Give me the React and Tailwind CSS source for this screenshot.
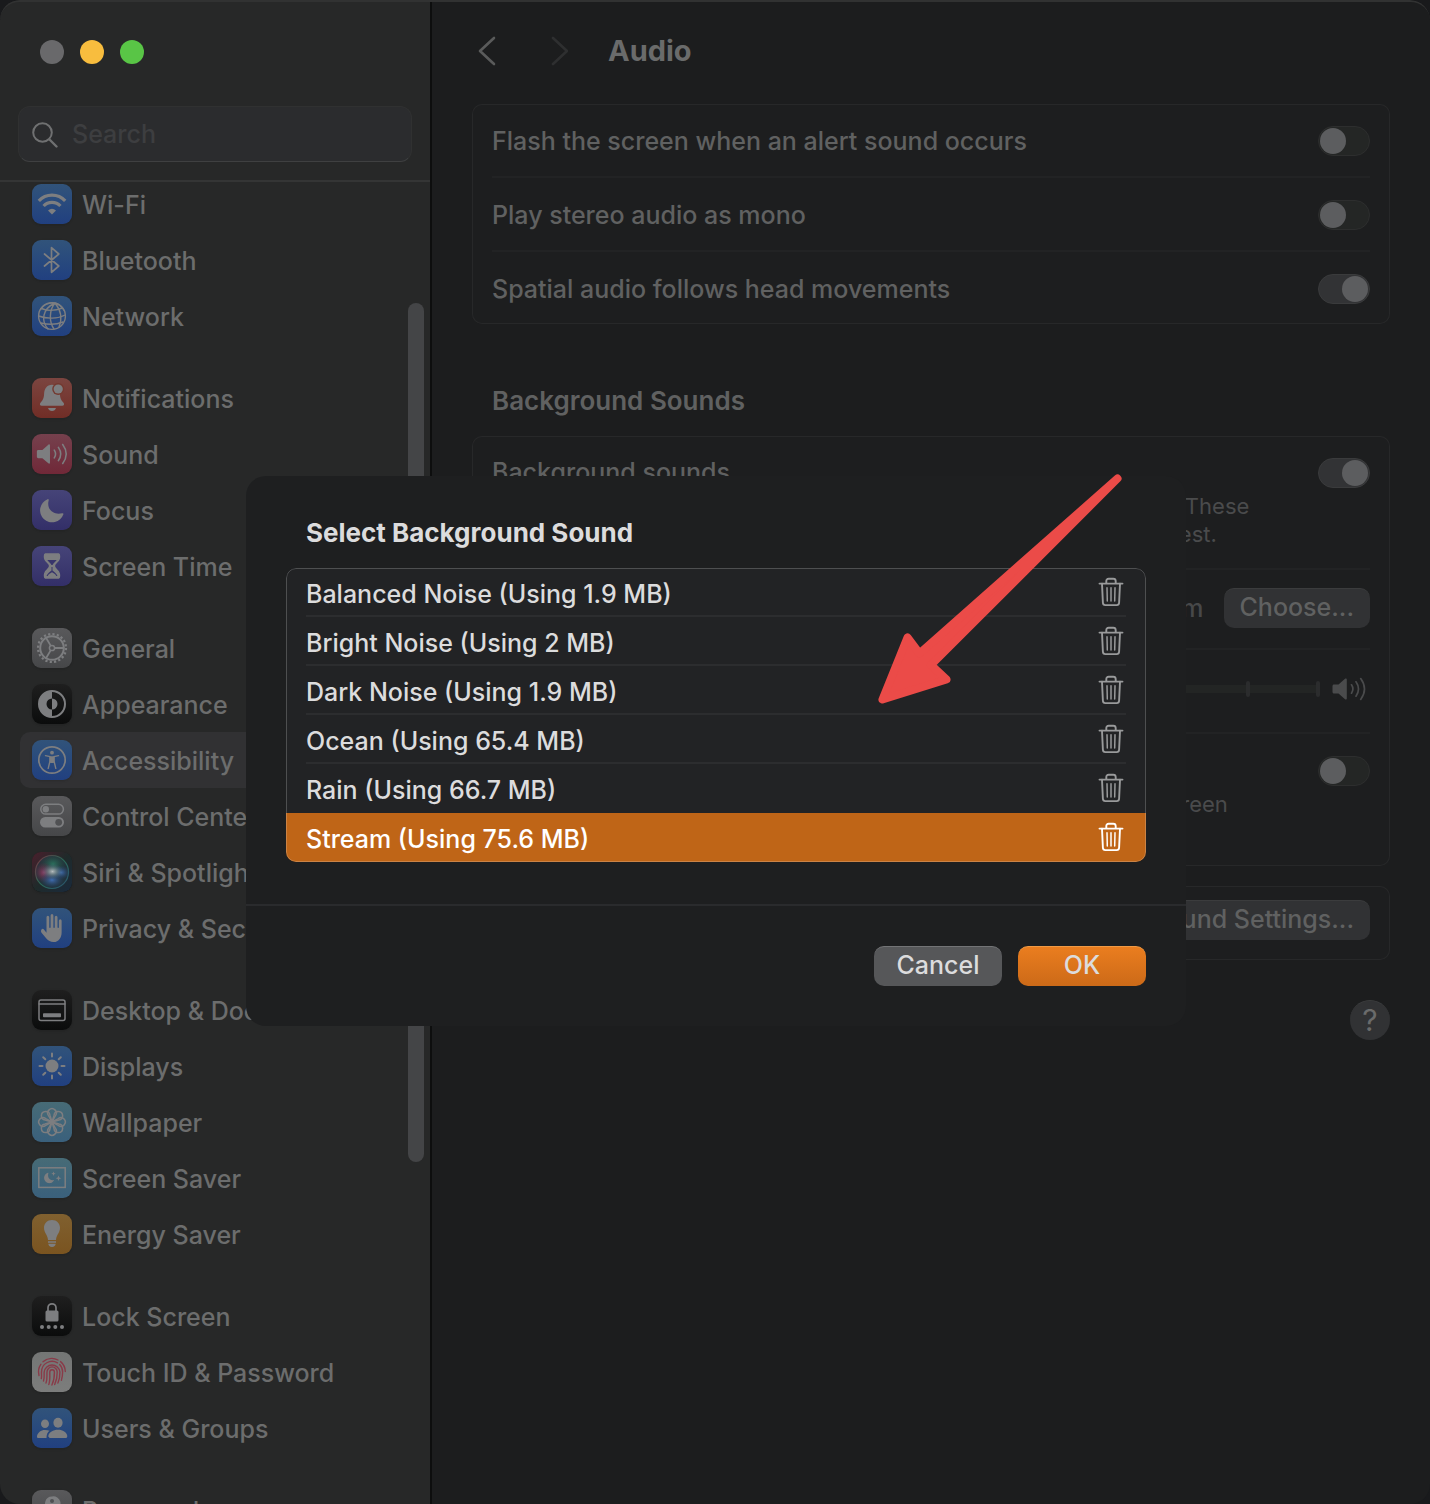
import React, { useState } from "react";
import { FaHand } from "react-icons/fa6";

const Speaker = ({ className }) => (
  <svg viewBox="0 0 34 24" className={className} fill="none" stroke="currentColor" strokeWidth="1.7" strokeLinecap="round">
    <path
      d="M2 7.5h4.5L13 1.8c.8-.7 1.8-.3 1.8.7v19c0 1-1 1.4-1.8.7L6.5 16.5H2c-.8 0-1.5-.7-1.5-1.5V9c0-.8.7-1.5 1.5-1.5z"
      fill="currentColor"
      stroke="none"
    />
    <path d="M19.5 7.8q2.8 4.2 0 8.4M24 4.8q5 7.2 0 14.4M28.7 1.6q7.6 10.4 0 20.8" />
  </svg>
);

const Trash = () => (
  <svg viewBox="0 0 26 30" className="h-[30px] w-[26px]" fill="none" stroke="currentColor" strokeWidth="1.9" strokeLinecap="round" strokeLinejoin="round">
    <path d="M1.5 6.6h23M8.3 6.4V4.2c0-1.5.9-2.4 2.4-2.4h4.6c1.5 0 2.4.9 2.4 2.4v2.2" />
    <path d="M4 6.8l.9 19c.1 1.4 1 2.3 2.4 2.3h11.4c1.4 0 2.3-.9 2.4-2.3l.9-19" />
    <path d="M9 10.7l.3 13.3M13 10.7V24M17 10.7L16.7 24" strokeWidth="1.5" />
  </svg>
);

// every drawing below lives on a 40x40 tile
const Glyph = ({ children }) => (
  <svg viewBox="0 0 40 40" className="h-10 w-10" fill="none" stroke="currentColor" strokeLinecap="round" strokeLinejoin="round">
    {children}
  </svg>
);

const icons = {
  wifi: (
    <Glyph>
      <g strokeWidth="3.2" strokeLinecap="butt">
        <path d="M6.8 16.8A18 18 0 0 1 33.2 16.8" />
        <path d="M11.6 22A11.4 11.4 0 0 1 28.4 22" />
      </g>
      <path d="M16 26.5q4-3.4 8 0l-4 4z" fill="currentColor" stroke="none" />
    </Glyph>
  ),
  bluetooth: (
    <Glyph>
      <path d="M12.5 14l14.3 12-7.3 6.3V7.7l7.3 6.3-14.3 12" strokeWidth="1.7" />
    </Glyph>
  ),
  network: (
    <Glyph>
      <g strokeWidth="1.4">
        <circle cx="20" cy="20" r="13.4" />
        <path d="M23 7C10 13 9 25 16 33M23 7c-6 7-6 19-1 26M23 7c5 6 8 14 4 24M23 7c-8-1-12 3-14.5 6.5M23 7c4 1 7 4 9.5 8" />
        <path d="M9.5 12.5c6 2.5 14 2.3 21-.5M6.7 20c8 3 19 3 26.5-1M9 27c8 2 16 1.5 22-1" />
      </g>
    </Glyph>
  ),
  bell: (
    <Glyph>
      <path
        d="M20 6.8c-5.2 0-7.7 4.2-7.9 9-.2 4.7-1.3 6.5-3.6 8.9-1.2 1.3-.5 3 1.2 3h20.6c1.7 0 2.4-1.7 1.2-3-2.3-2.4-3.4-4.2-3.6-8.9-.2-4.8-2.7-9-7.9-9z"
        fill="currentColor"
        stroke="none"
      />
      <path d="M16 30h8c-.6 2-2 3-4 3s-3.4-1-4-3z" fill="currentColor" stroke="none" />
      <circle cx="26.2" cy="11" r="6" fill="#74392f" stroke="none" />
      <circle cx="26.2" cy="11" r="4.6" fill="currentColor" stroke="none" />
    </Glyph>
  ),
  sound: <Speaker className="h-[22px] w-8" />,
  moon: (
    <Glyph>
      <path d="M15.6 9.2c.8-.3 1.3.3 1.1 1-2.4 8.5 4.2 15.3 13.5 13 .9-.2 1.5.3 1.2 1.1A12 12 0 1 1 15.6 9.2z" fill="currentColor" stroke="none" />
    </Glyph>
  ),
  hourglass: (
    <Glyph>
      <path
        d="M13.3 8h13.4c1 0 1 3.5.3 5.2-1 2.6-4.7 4.3-4.7 6.8s3.7 4.2 4.7 6.8c.7 1.7.7 5.2-.3 5.2H13.3c-1 0-1-3.5-.3-5.2 1-2.6 4.7-4.3 4.7-6.8s-3.7-4.2-4.7-6.8c-.7-1.700-.7-5.200.3-5.200z"
        fill="currentColor"
        strokeWidth="1.5"
      />
      <path d="M15.3 14h9.4c-1.2 1.9-3.4 3-4.2 5h-1c-.8-2-3-3.1-4.2-5zM19.5 21h1v3.5c1.5 1.5 4 2.6 5 5.5h-11c1-2.9 3.5-4 5-5.5z" fill="#38356b" stroke="none" />
      <path d="M15.5 30.3c1-2.3 3-3.2 4.5-4 1.5.8 3.5 1.7 4.5 4z" fill="currentColor" stroke="none" />
    </Glyph>
  ),
  gear: (
    <Glyph>
      <circle cx="20" cy="20" r="14" strokeWidth="2.2" strokeDasharray="2.2 2.198" strokeLinecap="butt" />
      <circle cx="20" cy="20" r="11.8" strokeWidth="2" />
      <circle cx="20" cy="20" r="2.6" strokeWidth="1.5" />
      <path d="M23 20h8.5M18.5 17.4l-4.5-7.6M18.5 22.6L14 30.2" strokeWidth="1.8" />
    </Glyph>
  ),
  appearance: (
    <Glyph>
      <circle cx="20" cy="20" r="13" strokeWidth="2" />
      <path d="M20 7a13 13 0 0 0 0 26v-7.5a5.5 5.5 0 0 1 0-11zM20 14.5a5.5 5.5 0 0 1 0 11z" fill="currentColor" stroke="none" />
    </Glyph>
  ),
  accessibility: (
    <Glyph>
      <circle cx="20" cy="20" r="13.2" strokeWidth="1.7" />
      <circle cx="20" cy="12.7" r="1.9" fill="currentColor" stroke="none" />
      <path d="M13.5 15.6l4.5 1v4.4l-1.8 7.3M26.5 15.6l-4.5 1v4.4l1.8 7.3" strokeWidth="1.4" />
      <path d="M17.5 16.2h5v5.3l-.8 1.5h-3.4l-.8-1.5z" fill="currentColor" stroke="none" />
    </Glyph>
  ),
  control: (
    <Glyph>
      <rect x="8.8" y="8.3" width="22.6" height="9.8" rx="4.9" strokeWidth="1.5" />
      <circle cx="13.8" cy="13.2" r="3.2" fill="currentColor" stroke="none" />
      <rect x="8" y="21" width="24" height="10.5" rx="5.2" fill="currentColor" stroke="none" />
      <circle cx="26.7" cy="26.3" r="3.4" fill="#505153" stroke="none" />
    </Glyph>
  ),
  siri: (
    <svg viewBox="0 0 40 40" className="h-10 w-10">
      <defs>
        <linearGradient id="siriTile" x1="0" y1="0" x2="1" y2="1">
          <stop offset="0" stopColor="#4a1f2c" />
          <stop offset=".5" stopColor="#1f2a2a" />
          <stop offset="1" stopColor="#1a2a3c" />
        </linearGradient>
        <linearGradient id="siriRing" x1="0" y1="0" x2="1" y2="1">
          <stop offset="0" stopColor="#7a3040" />
          <stop offset=".5" stopColor="#2b6a58" />
          <stop offset="1" stopColor="#2a5070" />
        </linearGradient>
        <radialGradient id="siriGreen">
          <stop offset="0" stopColor="#2b6f5c" />
          <stop offset="1" stopColor="#235048" stopOpacity="0" />
        </radialGradient>
        <radialGradient id="siriPink">
          <stop offset="0" stopColor="#8f3f66" />
          <stop offset="1" stopColor="#6a2a44" stopOpacity="0" />
        </radialGradient>
        <radialGradient id="siriBlue">
          <stop offset="0" stopColor="#3f6cae" />
          <stop offset="1" stopColor="#2a4670" stopOpacity="0" />
        </radialGradient>
        <radialGradient id="siriGlow">
          <stop offset="0" stopColor="#b4bcbe" />
          <stop offset=".35" stopColor="#7d9094" stopOpacity=".8" />
          <stop offset="1" stopColor="#3a5a6a" stopOpacity="0" />
        </radialGradient>
      </defs>
      <rect width="40" height="40" rx="9" fill="url(#siriTile)" />
      <circle cx="20" cy="20" r="16.5" fill="#253a45" fillOpacity=".6" stroke="url(#siriRing)" strokeWidth="1.2" />
      <ellipse cx="21" cy="12" rx="13" ry="10" fill="url(#siriGreen)" />
      <ellipse cx="12" cy="20.5" rx="10" ry="10" fill="url(#siriPink)" />
      <ellipse cx="29" cy="20.5" rx="9" ry="7" fill="url(#siriBlue)" />
      <ellipse cx="20" cy="28" rx="12" ry="8" fill="url(#siriBlue)" />
      <ellipse cx="20.5" cy="19.5" rx="11" ry="8" fill="url(#siriGlow)" />
    </svg>
  ),
  hand: <FaHand className="h-[28px] w-[22px]" preserveAspectRatio="none" />,
  desktop: (
    <Glyph>
      <rect x="7" y="10" width="26" height="20.5" rx="2" strokeWidth="1.5" />
      <path d="M7 14h26" strokeWidth="1.3" />
      <rect x="11" y="23.2" width="18" height="4" rx=".8" fill="currentColor" stroke="none" />
    </Glyph>
  ),
  sun: (
    <Glyph>
      <circle cx="20" cy="20" r="6.5" fill="currentColor" stroke="none" />
      <path d="M20 7.5v3M20 29.5v3M7.5 20h3M29.5 20h3M11.2 11.2l2.1 2.1M26.7 26.7l2.1 2.1M11.2 28.8l2.1-2.1M26.7 13.3l2.1-2.1" strokeWidth="2" />
    </Glyph>
  ),
  flower: (
    <Glyph>
      {[0, 45, 90, 135, 180, 225, 270, 315].map((angle) => (
        <path key={angle} d="M20 20l-3.4-6.3a4.3 4.3 0 1 1 6.8 0z" transform={`rotate(${angle} 20 20)`} strokeWidth="1.5" />
      ))}
      <circle cx="20" cy="20" r="2.2" fill="currentColor" stroke="none" />
    </Glyph>
  ),
  saver: (
    <Glyph>
      <rect x="6.8" y="9.8" width="26.4" height="19.6" strokeWidth="1.5" strokeLinejoin="miter" />
      <path d="M16.5 14.8a5.2 5.2 0 1 0 5.5 7.3c-4.5 1-7-3-5.5-7.3z" fill="currentColor" stroke="none" />
      <path d="M21.5 13.5l.6 1.600 1.600.6-1.600.6-.6 1.600-.6-1.600-1.600-.6 1.600-.6zM26.500 17.500l.8 2 2 .8-2 .8-.8 2-.8-2-2-.8 2-.8z" fill="currentColor" stroke="none" />
    </Glyph>
  ),
  bulb: (
    <Glyph>
      <path d="M20 6c-4.7 0-8 3.4-8 7.8 0 5.2 3.6 6.7 4 12.2h8c.4-5.5 4-7 4-12.2C28 9.4 24.7 6 20 6zM16 27.2h8v1.5h-8zM16.3 29.7h7.4c-.2 1.800-1.400 3.200-3.700 3.200s-3.500-1.400-3.700-3.200z" fill="currentColor" stroke="none" />
    </Glyph>
  ),
  lock: (
    <Glyph>
      <rect x="13.5" y="14.5" width="13" height="11" rx="1.5" fill="currentColor" stroke="none" />
      <path d="M16 15v-3.2a4 4 0 0 1 8 0V15" strokeWidth="1.7" />
      <g fill="currentColor" stroke="none">
        <circle cx="10" cy="31" r="2" />
        <circle cx="16.7" cy="31" r="2" />
        <circle cx="23.3" cy="31" r="2" />
        <circle cx="30" cy="31" r="2" />
      </g>
    </Glyph>
  ),
  touch: (
    <Glyph>
      <g stroke="#893a48" strokeWidth="1.4">
        <path d="M11 9.8A13.400 13.400 0 0 1 26 8M28.600 9.600A13.400 13.400 0 0 1 33.300 19.500M9 12.200A13.400 13.400 0 0 0 7 23.500" />
        <path d="M9.300 26.500c.6-2.500 0-4 .2-6.500a10.600 10.600 0 0 1 16-9.200M27.700 12.600A10.600 10.600 0 0 1 30.600 20c0 3-.3 5.500-1.200 8.200" />
        <path d="M11.500 29c1.200-3.500.4-6 .7-9a7.900 7.900 0 0 1 15.700 0c.1 3.700-.5 7.500-2 11" />
        <path d="M14 31c1.500-4 .7-7.500 1-11a5.100 5.100 0 0 1 10.200 0c.1 4.300-.7 8.500-2.500 12.500" />
        <path d="M16.800 32.500c1.500-4 .9-8.500 1-12.500a2.300 2.300 0 0 1 4.600 0c.1 4.500-.6 9-2.500 13" />
      </g>
    </Glyph>
  ),
  users: (
    <Glyph>
      <g fill="currentColor" stroke="none">
        <ellipse cx="13" cy="15.7" rx="4" ry="4.3" />
        <ellipse cx="26" cy="14.8" rx="4.6" ry="5" />
        <path d="M16.800 29c-.5 0-.6-.7-.4-1.400.8-3.300 4.600-5.800 9.600-5.800s8.500 2.500 9.200 5.800c.2.800 0 2.400-1.200 2.400H17.600z" />
        <path d="M17.500 22.800c-2 1.400-3 3.700-3 7.200H6c-1 0-1.200-1-1-1.900.7-3.500 3.700-6.100 8-6.100 1.700 0 3.200.3 4.500.8z" />
      </g>
    </Glyph>
  ),
  key: (
    <Glyph>
      <path d="M20 6.500a7 7 0 0 0-3 13.300V33l3 3 4-4-2-3 2-3-2-3 1-2.800A7 7 0 0 0 20 6.500z" fill="currentColor" stroke="none" />
      <circle cx="20" cy="11" r="2" fill="#505153" stroke="none" />
    </Glyph>
  ),
};

const blue = "from-[#31537a] to-[#214080]";
const indigo = "from-[#464478] to-[#332f68]";
const gray = "from-[#59595b] to-[#464749]";
const black = "from-[#1f1f1f] to-[#0b0c0c]";
const cyan = "from-[#476b76] to-[#3a607c]";

const groups = [
  [
    { name: "Wi-Fi", icon: "wifi", tile: blue },
    { name: "Bluetooth", icon: "bluetooth", tile: blue },
    { name: "Network", icon: "network", tile: blue },
  ],
  [
    { name: "Notifications", icon: "bell", tile: "from-[#7b4540] to-[#712d26]" },
    { name: "Sound", icon: "sound", tile: "from-[#75404d] to-[#702838]" },
    { name: "Focus", icon: "moon", tile: indigo },
    { name: "Screen Time", icon: "hourglass", tile: indigo },
  ],
  [
    { name: "General", icon: "gear", tile: gray },
    { name: "Appearance", icon: "appearance", tile: black },
    { name: "Accessibility", icon: "accessibility", tile: blue },
    { name: "Control Center", icon: "control", tile: gray },
    { name: "Siri & Spotlight", icon: "siri", tile: black },
    { name: "Privacy & Security", icon: "hand", tile: blue },
  ],
  [
    { name: "Desktop & Dock", icon: "desktop", tile: black },
    { name: "Displays", icon: "sun", tile: blue },
    { name: "Wallpaper", icon: "flower", tile: cyan },
    { name: "Screen Saver", icon: "saver", tile: cyan },
    { name: "Energy Saver", icon: "bulb", tile: "from-[#80602f] to-[#7a5420]" },
  ],
  [
    { name: "Lock Screen", icon: "lock", tile: black },
    { name: "Touch ID & Password", icon: "touch", tile: "from-[#747675] to-[#7c7d7c]" },
    { name: "Users & Groups", icon: "users", tile: blue },
  ],
  [{ name: "Passwords", icon: "key", tile: gray }],
];

const sounds = [
  { name: "Balanced Noise", size: "1.9 MB" },
  { name: "Bright Noise", size: "2 MB" },
  { name: "Dark Noise", size: "1.9 MB" },
  { name: "Ocean", size: "65.4 MB" },
  { name: "Rain", size: "66.7 MB" },
  { name: "Stream", size: "75.6 MB" },
];

const Toggle = ({ id, on }) => (
  <input
    id={id}
    type="checkbox"
    defaultChecked={on}
    className="h-[30px] w-[52px] shrink-0 appearance-none rounded-full border border-[#2d2e2e] bg-[#242625] p-px before:block before:h-[26px] before:w-[26px] before:rounded-full before:bg-[#5c5d5f] checked:border-[#3a3b3c] checked:bg-[#323335] checked:before:ml-[22px]"
  />
);

const Card = ({ children, className = "" }) => (
  <div className={`rounded-[10px] bg-[#1d1e1f] px-5 ring-1 ring-[#272829] ring-inset ${className}`}>{children}</div>
);

const Sidebar = () => (
  <aside className="flex w-[432px] shrink-0 flex-col border-r-2 border-[#0d0e0e] bg-[#272828]">
    <div className="flex h-[182px] shrink-0 flex-col border-b-2 border-[#343535]">
      <div className="flex gap-4 px-10 pt-10">
        <button aria-label="Close" className="h-6 w-6 rounded-full bg-[#69696b]" />
        <button aria-label="Minimize" className="h-6 w-6 rounded-full bg-[#f8bd3e]" />
        <button aria-label="Zoom" className="h-6 w-6 rounded-full bg-[#59c546]" />
      </div>
      <label className="mx-[18px] mt-[42px] flex h-14 items-center gap-[14px] rounded-xl border border-[#303131] border-b-[#3f4041] bg-[#2b2c2e] px-[13px] pt-0.5">
        <svg viewBox="0 0 26 26" className="h-[26px] w-[26px] shrink-0 text-[#6f7071]" fill="none" stroke="currentColor" strokeWidth="2" strokeLinecap="round">
          <circle cx="10.5" cy="10.5" r="9.3" />
          <path d="M17.5 17.5l7 7" strokeWidth="2.4" />
        </svg>
        <input type="search" placeholder="Search" className="w-full bg-transparent text-[25px] font-medium outline-none placeholder:text-[#3d3e40]" />
      </label>
    </div>
    <div className="relative min-h-0 flex-1 overflow-hidden">
      <nav className="-mt-1.5 flex flex-col gap-[26px]">
        {groups.map((group, index) => (
          <ul key={index}>
            {group.map((item) => (
              <li key={item.name}>
                <a
                  href="#"
                  className={`mx-5 flex h-14 items-center gap-[10px] rounded-[10px] px-3 text-[25px] font-medium whitespace-nowrap text-[#6c6d6d] ${
                    item.name === "Accessibility" ? "bg-[#313133]" : ""
                  }`}
                >
                  <span className={`flex h-10 w-10 items-center justify-center rounded-[9px] bg-linear-to-b text-[#7d7e80] shadow-sm ${item.tile}`}>{icons[item.icon]}</span>
                  <span className="pt-[3px]">{item.name}</span>
                </a>
              </li>
            ))}
          </ul>
        ))}
      </nav>
      <div className="absolute top-[121px] right-1.5 h-[65%] w-4 rounded-full bg-[#444547]" />
    </div>
  </aside>
);

const AudioPane = () => (
  <main className="min-w-0 flex-1 bg-[#1c1d1e] px-10 text-[25px] leading-8 font-medium text-[#606161]">
    <header className="flex h-[104px] items-center pb-0.5">
      <button aria-label="Back" className="px-1 text-[#5a5b5b]">
        <svg viewBox="0 0 24 32" className="h-8 w-6" fill="none" stroke="currentColor" strokeWidth="2.6" strokeLinecap="round" strokeLinejoin="round">
          <path d="M18 3L4 16l14 13" />
        </svg>
      </button>
      <button aria-label="Forward" className="ml-9 px-1 text-[#2e2f30]">
        <svg viewBox="0 0 24 32" className="h-8 w-6" fill="none" stroke="currentColor" strokeWidth="2.6" strokeLinecap="round" strokeLinejoin="round">
          <path d="M9 3l14 13L9 29" />
        </svg>
      </button>
      <h1 className="ml-9 text-[29px] font-bold text-[#6a6b6b]">Audio</h1>
    </header>

    <Card>
      <div className="flex h-[74px] items-center justify-between border-b-2 border-[#222324] pt-0.5">
        <label htmlFor="flash">Flash the screen when an alert sound occurs</label>
        <Toggle id="flash" />
      </div>
      <div className="flex h-[74px] items-center justify-between border-b-2 border-[#222324] pt-0.5">
        <label htmlFor="mono">Play stereo audio as mono</label>
        <Toggle id="mono" />
      </div>
      <div className="flex h-[72px] items-center justify-between pt-0.5">
        <label htmlFor="spatial">Spatial audio follows head movements</label>
        <Toggle id="spatial" on />
      </div>
    </Card>

    <h2 className="mt-[61px] mb-[19px] px-5 text-[26px] font-semibold">Background Sounds</h2>

    <Card>
      <div className="flex h-[134px] items-start justify-between border-b-2 border-[#222324] pt-[22px]">
        <div>
          <label htmlFor="sounds" className="-mt-0.5 block">
            Background sounds
          </label>
          <p className="mt-1 max-w-[780px] text-[22px] leading-7 font-normal text-[#4a4b4c]">
            Plays background sounds to mask unwanted environmental noise. These sounds can minimize distractions and help you to focus, calm, or rest.
          </p>
        </div>
        <Toggle id="sounds" on />
      </div>
      <div className="flex h-20 items-center justify-between border-b-2 border-[#222324] pb-0.5">
        <span>Background sound</span>
        <div className="flex items-center gap-5">
          <span className="text-[#474849]">Stream</span>
          <button className="h-10 rounded-[10px] border-t border-[#3b3c3d] bg-[#313234] px-4 pb-0.5 leading-none">Choose...</button>
        </div>
      </div>
      <div className="flex h-[84px] items-center justify-between border-b-2 border-[#222324] pb-1">
        <label htmlFor="volume">Background sounds volume</label>
        <div className="flex items-center gap-3">
          <div className="relative flex w-[424px] items-center">
            <input id="volume" type="range" defaultValue="30" className="h-2 w-full appearance-none rounded-full bg-[#232524]" />
            <div className="pointer-events-none absolute inset-x-0 flex justify-between">
              {[0, 1, 2, 3, 4, 5, 6].map((tick) => (
                <span key={tick} className="h-4 w-1 rounded-full bg-[#2b2c2d]" />
              ))}
            </div>
          </div>
          <Speaker className="mr-1 h-6 w-[34px] text-[#4a4b4c]" />
        </div>
      </div>
      <div className="flex h-[132px] items-start justify-between pt-[22px]">
        <div>
          <label htmlFor="idle" className="-mt-0.5 block">
            Turn off background sounds when not in use
          </label>
          <p className="mt-1 max-w-[750px] text-[22px] leading-7 font-normal text-[#4a4b4c]">
            Turn off background sounds when your Mac is not in use or the screen is locked.
          </p>
        </div>
        <Toggle id="idle" />
      </div>
    </Card>

    <Card className="mt-5 flex h-[74px] items-center justify-end pb-1.5">
      <button className="h-10 rounded-[10px] border-t border-[#3b3c3d] bg-[#313234] px-4 pb-0.5 leading-none">Open Sound Settings...</button>
    </Card>

    <div className="mt-10 flex justify-end">
      <button aria-label="Help" className="h-10 w-10 rounded-full border-t border-[#3b3c3d] bg-[#313234] pb-0.5 text-[30px] leading-none font-normal text-[#6a6b6b]">
        ?
      </button>
    </div>
  </main>
);

const SoundDialog = ({ selected, onSelect }) => (
  <div className="absolute inset-0 flex items-center justify-center pb-0.5 pl-0.5">
    <section role="dialog" aria-labelledby="dialog-title" className="relative w-full max-w-[940px] rounded-[20px] bg-[#1e1f20] py-10 text-[25px] font-medium text-[#dcdcdd]">
      <h2 id="dialog-title" className="px-[60px] pt-px text-[26px] leading-[31px] font-bold">
        Select Background Sound
      </h2>
      <ul className="relative mx-10 mt-5 overflow-hidden rounded-[10px] bg-[#222325]">
        {sounds.map((sound, index) => {
          const active = selected === sound.name;
          const plain = active || sounds[index + 1]?.name === selected;
          return (
            <li key={sound.name} className={`px-5 ${active ? "bg-[#bf6517] text-white" : ""}`}>
              <div className={`flex h-[49px] items-center justify-between border-b-2 ${plain ? "border-transparent" : "border-[#2c2d2f]"}`}>
                <button className="h-full flex-1 pt-1.5 text-left" onClick={() => onSelect(sound.name)}>
                  {sound.name} (Using {sound.size})
                </button>
                <button aria-label={`Delete ${sound.name}`} className={`mr-0.5 ${active ? "" : "text-[#999a9b]"}`}>
                  <Trash />
                </button>
              </div>
            </li>
          );
        })}
        <div className="pointer-events-none absolute inset-0 rounded-[10px] border border-white/20" />
      </ul>
      <div className="mt-[42px] flex justify-end gap-4 border-t-2 border-[#2a2b2d] px-10 pt-10">
        <button className="h-10 w-32 rounded-[10px] border-t border-[#737476] bg-[#565759] pb-0.5 leading-none">Cancel</button>
        <button className="h-10 w-32 rounded-[10px] border-t border-[#f09a45] bg-linear-to-b from-[#ea7d1f] to-[#cc6a18] pb-0.5 leading-none">OK</button>
      </div>
      <svg viewBox="878 474 244 230" className="pointer-events-none absolute -top-0.5 right-16 h-[230px] w-[244px]">
        <path d="M1117.5 478.5L919.5 653.5 907.5 637.5 882.5 699.5 946.5 679.5 931 665z" fill="#eb4b48" stroke="#eb4b48" strokeWidth="8" strokeLinejoin="round" />
      </svg>
    </section>
  </div>
);

const App = () => {
  const [selected, setSelected] = useState("Stream");

  return (
    <div className="relative h-screen overflow-hidden bg-[#191a1c] font-['Inter',sans-serif]">
      <div className="relative flex h-full overflow-hidden rounded-[20px]">
        <Sidebar />
        <AudioPane />
        <div className="pointer-events-none absolute inset-0 rounded-[20px] border-t-2 border-[#313232]" />
      </div>
      <SoundDialog selected={selected} onSelect={setSelected} />
    </div>
  );
};

export default App;
